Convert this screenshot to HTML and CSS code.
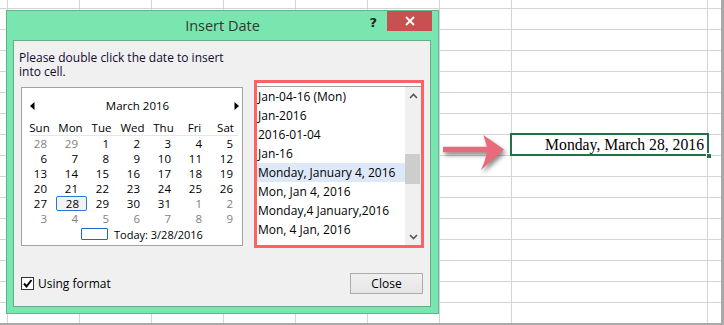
FILE: index.html
```html
<!DOCTYPE html>
<html>
<head>
<meta charset="utf-8">
<link rel="stylesheet" href="styles.css">
</head>
<body>
<div class="screen">
  <div class="sheet">
    <div class="cell-selected">Monday, March 28, 2016<span class="fill-handle"></span></div>
  </div>

  <svg class="arrow" width="76" height="48" viewBox="0 0 76 48">
    <path d="M5,16.8 L49,16.8 Q47.5,11 45.3,5 L66,19.5 L43,40 Q47.5,30 49,22.3 L5,22.3 Z" fill="#e96a7a"/>
  </svg>

  <div class="dialog">
    <div class="titlebar">
      <span class="title">Insert Date</span>
      <div class="controls">
        <span class="help">?</span>
        <button class="close" type="button">
          <svg width="10" height="10" viewBox="0 0 10 10"><path d="M1,1 L9,9 M9,1 L1,9" stroke="#fff" stroke-width="1.8"/></svg>
        </button>
      </div>
    </div>
    <div class="client">
      <p class="hint">Please double click the date to insert<br>into cell.</p>
      <div class="main-row">
        <div class="calendar">
          <div class="cal-head">
            <svg width="5" height="8" viewBox="0 0 5 8"><path d="M4.5,0 L0,4 L4.5,8 Z" fill="#000"/></svg>
            <span class="cal-month">March 2016</span>
            <svg width="5" height="8" viewBox="0 0 5 8"><path d="M0.5,0 L5,4 L0.5,8 Z" fill="#000"/></svg>
          </div>
          <div class="cal-days">
            <span>Sun</span><span>Mon</span><span>Tue</span><span>Wed</span><span>Thu</span><span>Fri</span><span>Sat</span>
          </div>
          <div class="cal-grid">
            <span class="other">28</span><span class="other">29</span><span>1</span><span>2</span><span>3</span><span>4</span><span>5</span>
            <span>6</span><span>7</span><span>8</span><span>9</span><span>10</span><span>11</span><span>12</span>
            <span>13</span><span>14</span><span>15</span><span>16</span><span>17</span><span>18</span><span>19</span>
            <span>20</span><span>21</span><span>22</span><span>23</span><span>24</span><span>25</span><span>26</span>
            <span>27</span><span class="today">28</span><span>29</span><span>30</span><span>31</span><span class="other">1</span><span class="other">2</span>
            <span class="other">3</span><span class="other">4</span><span class="other">5</span><span class="other">6</span><span class="other">7</span><span class="other">8</span><span class="other">9</span>
          </div>
          <div class="cal-today">
            <span class="today-box"></span>
            <span>Today: 3/28/2016</span>
          </div>
        </div>
        <div class="list-frame">
          <div class="listbox">
            <ul class="items">
              <li>Jan-04-16 (Mon)</li>
              <li>Jan-2016</li>
              <li>2016-01-04</li>
              <li>Jan-16</li>
              <li class="selected">Monday, January 4, 2016</li>
              <li>Mon, Jan 4, 2016</li>
              <li>Monday,4 January,2016</li>
              <li>Mon, 4 Jan, 2016</li>
            </ul>
            <div class="scrollbar">
              <span class="sb-btn"><svg width="9" height="6" viewBox="0 0 9 6"><path d="M1,5 L4.5,1.5 L8,5" fill="none" stroke="#555" stroke-width="1.6"/></svg></span>
              <span class="sb-track"><span class="sb-thumb"></span></span>
              <span class="sb-btn"><svg width="9" height="6" viewBox="0 0 9 6"><path d="M1,1 L4.5,4.5 L8,1" fill="none" stroke="#555" stroke-width="1.6"/></svg></span>
            </div>
          </div>
        </div>
      </div>
      <div class="bottom-row">
        <label class="check">
          <span class="box"><svg width="11" height="11" viewBox="0 0 11 11"><path d="M2,5.5 L4.5,8.5 L9.5,2" fill="none" stroke="#000" stroke-width="2"/></svg></span>
          <span>Using format</span>
        </label>
        <button class="btn" type="button">Close</button>
      </div>
    </div>
  </div>
</div>
</body>
</html>
```

FILE: styles.css
```css
* { box-sizing: border-box; }
html, body { margin: 0; padding: 0; background: #fff; }
body { width: 724px; height: 325px; overflow: hidden; }

.screen {
  position: relative;
  width: 724px;
  height: 325px;
  border-right: 3px solid #a9a9a9;
  border-bottom: 2px solid #a9a9a9;
  overflow: hidden;
}

.sheet {
  display: grid;
  grid-template-columns: 7px repeat(7, 72px) 196px 1fr;
  grid-template-rows: 8px repeat(15, 21px);
  height: 100%;
  background-image:
    linear-gradient(#d4d4d4, #d4d4d4),
    linear-gradient(#d4d4d4, #d4d4d4),
    linear-gradient(#d4d4d4, #d4d4d4),
    linear-gradient(#d4d4d4, #d4d4d4),
    linear-gradient(#d4d4d4, #d4d4d4),
    linear-gradient(#d4d4d4, #d4d4d4),
    linear-gradient(#d4d4d4, #d4d4d4),
    linear-gradient(#d4d4d4, #d4d4d4),
    linear-gradient(#d4d4d4, #d4d4d4),
    linear-gradient(to bottom, #d4d4d4 1px, transparent 1px);
  background-size:
    1px 100%, 1px 100%, 1px 100%, 1px 100%, 1px 100%,
    1px 100%, 1px 100%, 1px 100%, 1px 100%,
    100% 21px;
  background-position:
    7px 0, 79px 0, 151px 0, 223px 0, 295px 0, 367px 0, 439px 0, 511px 0, 707px 0,
    0 8px;
  background-repeat:
    no-repeat, no-repeat, no-repeat, no-repeat, no-repeat,
    no-repeat, no-repeat, no-repeat, no-repeat,
    repeat;
}

.cell-selected {
  grid-column: 9;
  grid-row: 8;
  position: relative;
  margin: -1px -2px -1px -1px;
  border: 2px solid #217346;
  background: #fff;
  font-family: "Liberation Serif", "Times New Roman", serif;
  font-size: 15.7px;
  line-height: 19px;
  text-align: right;
  padding-right: 3px;
  color: #000;
}
.fill-handle {
  position: absolute;
  right: -5px;
  bottom: -5px;
  width: 6px;
  height: 6px;
  background: #217346;
  border: 1px solid #fff;
}

.arrow {
  position: absolute;
  left: 438px;
  top: 130px;
  filter: drop-shadow(2px 3px 2px rgba(0,0,0,0.45));
}

.dialog {
  position: absolute;
  left: 6px;
  top: 10px;
  width: 433px;
  height: 304px;
  border: 1px solid #5db98b;
  background: #78e6ae;
  padding: 0 7px 6px 6px;
  display: flex;
  flex-direction: column;
  font-family: "Open Sans", "Noto Sans", sans-serif;
}

.titlebar {
  display: grid;
  height: 29px;
  flex: none;
}
.title {
  grid-area: 1 / 1;
  text-align: center;
  font-size: 14.5px;
  line-height: 29px;
  color: #2e3a33;
  margin-left: 1px;
}
.controls {
  grid-area: 1 / 1;
  justify-self: end;
  display: flex;
  align-items: flex-start;
  margin-right: -1px;
}
.help {
  font-family: "DejaVu Sans", sans-serif;
  font-weight: bold;
  font-size: 13px;
  line-height: 20px;
  color: #222;
  margin-top: 2px;
  margin-right: 10px;
}
.close {
  width: 45px;
  height: 20px;
  border: 0;
  padding: 0;
  background: #c75050;
  display: flex;
  align-items: center;
  justify-content: center;
}

.client {
  flex: 1;
  background: #f0f0f0;
  border: 1px solid #68ab89;
  display: flex;
  flex-direction: column;
  font-family: "Open Sans", "Noto Sans", sans-serif;
  font-size: 12px;
  color: #000;
}

.hint {
  margin: 10px 0 0 5px;
  font-size: 12px;
  line-height: 14px;
  color: #140a30;
}

.main-row {
  display: flex;
  align-items: flex-start;
  margin-top: 1px;
  padding-left: 7px;
}

.calendar {
  margin-top: 7px;
  width: 222px;
  height: 159px;
  background: #fff;
  border: 1px solid #a3a3a3;
  padding-left: 2px;
  font-size: 11px;
}
.cal-head {
  display: flex;
  align-items: center;
  justify-content: space-between;
  margin: 10px 3px 0 6px;
  height: 16px;
}
.cal-month {
  font-size: 11.5px;
  line-height: 16px;
  margin-left: 6px;
}
.cal-days {
  display: grid;
  grid-template-columns: repeat(7, 31px);
  margin-top: 7px;
  height: 15px;
  background: linear-gradient(#e6e6e6, #e6e6e6) 6px 100% / 208px 1px no-repeat;
}
.cal-days span {
  text-align: center;
  line-height: 13px;
  font-size: 11.5px;
}
.cal-grid {
  display: grid;
  grid-template-columns: repeat(7, 31px);
  grid-auto-rows: 15px;
}
.cal-grid span {
  text-align: right;
  padding-right: 8px;
  line-height: 15px;
  font-size: 11.5px;
  color: #000;
}
.cal-grid span.other { color: #7f7f7f; }
.cal-grid span.today {
  border: 1px solid #2a78d0;
  border-radius: 2px;
  background: #f2f2f2;
  margin: 0 -1px 0 1px;
  padding-right: 7px;
  line-height: 13px;
}
.cal-today {
  display: flex;
  align-items: center;
  height: 16px;
  padding-left: 57px;
  font-size: 11px;
}
.today-box {
  width: 27px;
  height: 12px;
  border: 1px solid #1d66c4;
  border-radius: 1px;
  margin-right: 6px;
}

.list-frame {
  margin-left: 11px;
  width: 170px;
  height: 168px;
  border: 3px solid #ff6262;
  background: #fff;
  padding-top: 3px;
}
.listbox {
  display: flex;
  height: 100%;
  border-top: 1px solid #9d9d9d;
}
.items {
  list-style: none;
  margin: 0;
  padding: 0;
  width: 148px;
  font-size: 12px;
}
.items li {
  height: 19px;
  line-height: 19px;
  padding-left: 1px;
  white-space: nowrap;
}
.items li.selected { background: #dde8f8; }

.scrollbar {
  width: 16px;
  background: #f0f0f0;
  display: flex;
  flex-direction: column;
}
.sb-btn {
  height: 17px;
  display: flex;
  align-items: center;
  justify-content: center;
}
.sb-track {
  flex: 1;
  display: flex;
  flex-direction: column;
}
.sb-thumb {
  margin-top: 50px;
  height: 30px;
  background: #cdcdcd;
  margin-right: 1px;
}

.bottom-row {
  margin: auto 7px 12px 7px;
  display: flex;
  align-items: center;
  justify-content: space-between;
}
.check {
  display: flex;
  align-items: center;
  font-size: 12px;
}
.check .box {
  width: 13px;
  height: 13px;
  border: 1px solid #333;
  background: #fff;
  display: flex;
  align-items: center;
  justify-content: center;
  margin-right: 4px;
}
.btn {
  width: 73px;
  height: 21px;
  border: 1px solid #acacac;
  background: linear-gradient(#f0f0f0, #e5e5e5);
  font-family: "Open Sans", "Noto Sans", sans-serif;
  font-size: 12px;
  color: #000;
  padding: 0;
}
```
